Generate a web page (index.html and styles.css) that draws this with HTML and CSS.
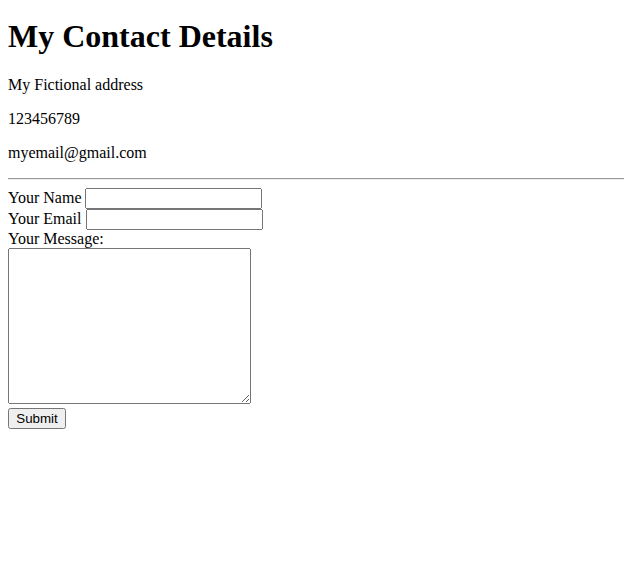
FILE: index.html
```html
<!DOCTYPE html>
<html>
<head>
<meta charset="utf-8">
<title>My Contact Details</title>
<link rel="stylesheet" href="styles.css">
</head>
<body class="page">
<h1 class="title">My Contact Details</h1>
<p>My Fictional address</p>
<p>123456789</p>
<p>myemail@gmail.com</p>
<div class="rule"></div>
<form class="contact">
<label>Your Name</label> <input type="text" class="field"><br>
<label>Your Email</label> <input type="email" class="field"><br>
<label>Your Message:</label><br>
<textarea class="message" rows="10" cols="30"></textarea><br>
<input type="submit" class="submit" value="Submit">
</form>
</body>
</html>
```
FILE: styles.css
```css
html {
  overflow-x: hidden;
}
.page {
  font-family: "Liberation Serif", "Times New Roman", serif;
}
.title {
  margin-top: 10px;
}
.rule {
  margin: 8px -40px 8px 0;
  height: 0;
  border-top: 1px solid #9a9a9a;
  border-bottom: 1px solid #eeeeee;
}
.field, .message, .submit {
  font-family: "Liberation Sans", Arial, sans-serif;
}
.field {
  box-sizing: border-box;
  width: 177px;
  height: 21px;
}
.message {
  box-sizing: border-box;
  width: 243px;
  height: 156px;
}
.submit {
  font-size: 13.33px;
  width: 58px;
}
```
